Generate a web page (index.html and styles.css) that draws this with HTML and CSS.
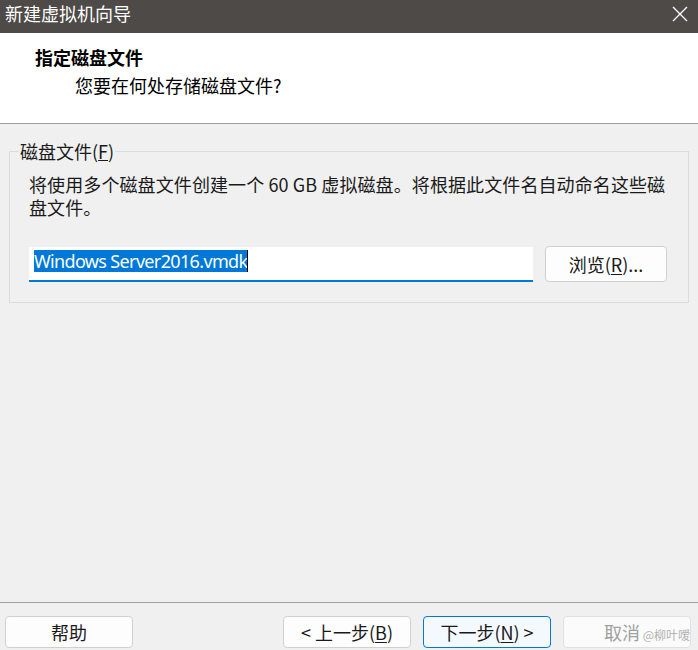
FILE: index.html
```html
<!DOCTYPE html>
<html lang="zh-CN">
<head>
    <meta charset="UTF-8">
    <title>新建虚拟机向导</title>
    <link rel="stylesheet" href="styles.css">
</head>
<body>
    <div class="wizard">
        <div class="titlebar">
            <span class="title">新建虚拟机向导</span>
            <svg class="close" width="16" height="16" viewBox="0 0 16 16">
                <path d="M1 1 L15 15 M15 1 L1 15" stroke="#ffffff" stroke-width="1.4" fill="none"/>
            </svg>
        </div>

        <div class="header">
            <div class="header-title">指定磁盘文件</div>
            <div class="header-sub">您要在何处存储磁盘文件?</div>
        </div>

        <div class="content">
            <fieldset class="group">
                <legend>磁盘文件(<u>F</u>)</legend>
                <p class="desc">将使用多个磁盘文件创建一个 60 GB 虚拟磁盘。将根据此文件名自动命名这些磁盘文件。</p>
                <div class="file-row">
                    <div class="file-input"><span class="selected">Windows Server2016.vmdk</span><span class="caret"></span></div>
                    <button class="btn browse">浏览(<u>R</u>)...</button>
                </div>
            </fieldset>
        </div>

        <div class="footer">
            <button class="btn">帮助</button>
            <div class="nav">
                <button class="btn">&lt; 上一步(<u>B</u>)</button>
                <button class="btn primary">下一步(<u>N</u>) &gt;</button>
                <button class="btn disabled">取消</button>
            </div>
            <span class="watermark">@柳叶嗳</span>
        </div>
    </div>
</body>
</html>
```

FILE: styles.css
```css
body {
    margin: 0;
    padding: 0;
    font-family: "Noto Sans", "Noto Sans CJK SC", sans-serif;
    font-size: 18px;
    color: #1a1a1a;
    background-color: #f0f0f0;
}

.wizard {
    width: 698px;
    height: 650px;
    display: flex;
    flex-direction: column;
    background-color: #f0f0f0;
    overflow: hidden;
}

.titlebar {
    height: 33px;
    background-color: #4e4a47;
    color: #ffffff;
    display: flex;
    align-items: center;
    justify-content: space-between;
    padding: 0 10px 0 5px;
    flex-shrink: 0;
}

.title {
    font-family: "Noto Sans CJK SC", sans-serif;
    font-size: 18px;
    line-height: 20px;
    margin-top: -7px;
}

.close {
    margin-top: -5px;
}

.header {
    height: 91px;
    background-color: #ffffff;
    border-bottom: 1px solid #a0a0a0;
    flex-shrink: 0;
    box-sizing: border-box;
    padding-top: 12px;
}

.header-title {
    font-family: "Noto Sans CJK SC", sans-serif;
    font-weight: bold;
    font-size: 18px;
    line-height: 24px;
    padding-left: 35px;
    color: #000000;
}

.header-sub {
    font-family: "Noto Sans CJK SC", sans-serif;
    font-size: 18px;
    line-height: 24px;
    padding-left: 75px;
    margin-top: 4px;
    color: #000000;
}

.content {
    flex: 1;
    padding: 16px 9px 0 9px;
}

.group {
    margin: 0;
    border: 1px solid #dcdcdc;
    padding: 11px 19px 20px 19px;
    height: 163px;
    box-sizing: border-box;
}

.group legend {
    font-family: "Noto Sans CJK SC", sans-serif;
    padding: 0 1px;
    margin-left: -10px;
    line-height: 22px;
}

.desc {
    margin: 0;
    font-family: "Noto Sans CJK SC", sans-serif;
    line-height: 23px;
    letter-spacing: 0.1px;
}

.file-row {
    display: flex;
    align-items: flex-start;
    gap: 12px;
    margin-top: 28px;
}

.file-input {
    width: 504px;
    height: 35px;
    box-sizing: border-box;
    background-color: #ffffff;
    border-bottom: 2px solid #0078d7;
    padding: 3px 0 0 5px;
    display: flex;
    align-items: flex-start;
}

.selected {
    background-color: #0078d7;
    color: #ffffff;
    font-family: "Noto Sans", sans-serif;
    font-size: 18px;
    line-height: 22px;
    letter-spacing: -0.65px;
}

.caret {
    width: 1px;
    height: 22px;
    background-color: #000000;
}

.btn {
    font-family: "Noto Sans CJK SC", sans-serif;
    font-size: 18px;
    color: #1a1a1a;
    width: 128px;
    height: 32px;
    background-color: #fdfdfd;
    border: 1px solid #d0d0d0;
    border-radius: 4px;
    padding: 0;
    line-height: 28px;
}

.btn u {
    text-underline-offset: 2px;
}

.browse {
    width: 122px;
    height: 36px;
    margin-top: -1px;
}

.footer {
    position: relative;
    height: 48px;
    border-top: 1px solid #a0a0a0;
    box-sizing: border-box;
    display: flex;
    justify-content: space-between;
    align-items: flex-start;
    padding: 13px 7px 0 5px;
    flex-shrink: 0;
}

.nav {
    display: flex;
    gap: 12px;
}

.primary {
    border-color: #0078d7;
    background-color: #f4f9fe;
}

.disabled {
    color: #a0a0a0;
    background-color: #fbfbfb;
    border-color: #e0e0e0;
    padding-right: 10px;
}

.watermark {
    position: absolute;
    right: 8px;
    bottom: 7px;
    font-family: "Noto Sans CJK SC", sans-serif;
    font-size: 12px;
    color: rgba(140, 140, 140, 0.7);
}
```
